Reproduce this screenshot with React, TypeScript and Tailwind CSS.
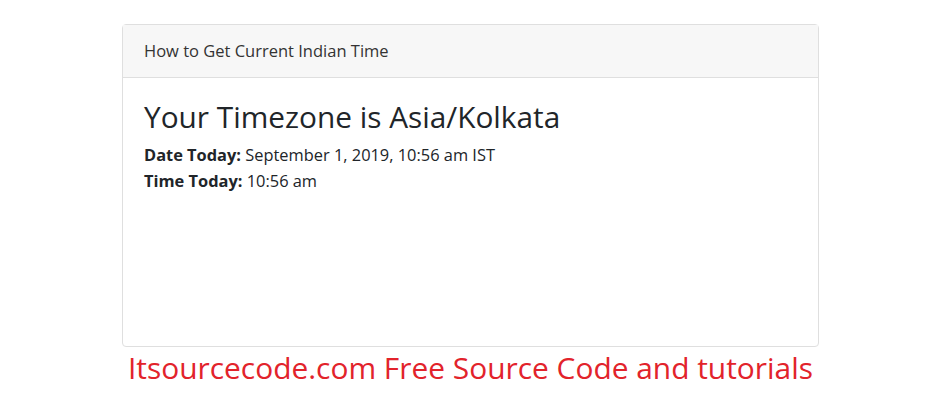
export default function App() {
  return (
    <div className="flex h-[420px] w-[929px] flex-col items-center bg-white pt-6 pl-3 font-['Open_Sans',sans-serif]">
      <div className="flex h-[323px] w-[697px] flex-col rounded border border-[#dfdfdf] bg-white">
        <div className="flex h-[53px] items-center border-b border-[#dfdfdf] bg-[#f7f7f7] px-[21px] text-[16.5px] text-[#333]">
          How to Get Current Indian Time
        </div>
        <div className="px-[21px] pt-[20px] text-[16.4px] leading-[26px] text-[#212529]">
          <h2 className="mb-[6px] text-[29.8px] leading-[38px] font-medium">Your Timezone is Asia/Kolkata</h2>
          <div>
            <b>Date Today:</b> September 1, 2019, 10:56 am IST
          </div>
          <div>
            <b>Time Today:</b> 10:56 am
          </div>
        </div>
      </div>
      <div className="mt-[1px] text-[29.9px] leading-[40px] text-[#e2232b]">
        Itsourcecode.com Free Source Code and tutorials
      </div>
    </div>
  );
}
